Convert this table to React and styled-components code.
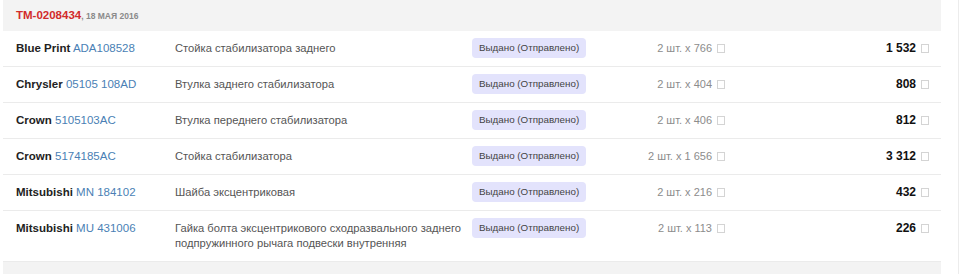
import React from 'react';
import styled, { createGlobalStyle } from 'styled-components';

const rows = [
  { brand: 'Blue Print', code: 'ADA108528', name: 'Стойка стабилизатора заднего', qty: '2 шт. x 766', total: '1 532' },
  { brand: 'Chrysler', code: '05105 108AD', name: 'Втулка заднего стабилизатора', qty: '2 шт. x 404', total: '808' },
  { brand: 'Crown', code: '5105103AC', name: 'Втулка переднего стабилизатора', qty: '2 шт. x 406', total: '812' },
  { brand: 'Crown', code: '5174185AC', name: 'Стойка стабилизатора', qty: '2 шт. x 1 656', total: '3 312' },
  { brand: 'Mitsubishi', code: 'MN 184102', name: 'Шайба эксцентриковая', qty: '2 шт. x 216', total: '432' },
  {
    brand: 'Mitsubishi',
    code: 'MU 431006',
    name: 'Гайка болта эксцентрикового сходразвального заднего подпружинного рычага подвески внутренняя',
    qty: '2 шт. x 113',
    total: '226'
  }
];

function App() {
  return (
    <>
      <GlobalStyle />
      <Page>
        <Order>
          <OrderHeader>
            <OrderNumber>ТМ-0208434</OrderNumber>
            <OrderDate>, 18 мая 2016</OrderDate>
          </OrderHeader>
          {rows.map((r, i) => (
            <Row key={i}>
              <Brand>
                <b>{r.brand}</b> <CodeLink>{r.code}</CodeLink>
              </Brand>
              <Name>{r.name}</Name>
              <Status>
                <Badge>Выдано (Отправлено)</Badge>
              </Status>
              <Qty>
                {r.qty}
                <Rub />
              </Qty>
              <Total>
                {r.total}
                <Rub />
              </Total>
            </Row>
          ))}
          <OrderHeader />
        </Order>
      </Page>
    </>
  );
}

const GlobalStyle = createGlobalStyle`
  body {
    margin: 0;
    background: #fff;
    font-family: "Liberation Sans", Arial, sans-serif;
  }
`;

const Page = styled.div`
  width: 955px;
  height: 274px;
  padding-left: 3px;
  border-right: 1px solid #ececec;
  overflow: hidden;
`;

const Order = styled.div`
  width: 938px;
`;

const OrderHeader = styled.div`
  display: flex;
  align-items: baseline;
  height: 31px;
  padding: 9px 0 0 13px;
  box-sizing: border-box;
  background: #f3f3f3;
`;

const OrderNumber = styled.span`
  color: #d22b2b;
  font-size: 11.5px;
  font-weight: 700;
`;

const OrderDate = styled.span`
  color: #8a8a8a;
  font-size: 8.5px;
  font-weight: 700;
  text-transform: uppercase;
`;

const Row = styled.div`
  display: grid;
  grid-template-columns: 172px 297px 157px 96px 1fr;
  align-items: start;
  padding: 7px 12px 8px 0;
  border-bottom: 1px solid #ebebeb;
  font-size: 11.2px;
  line-height: 20px;

  &:nth-child(7) {
    padding-bottom: 10px;
  }
`;

const Brand = styled.div`
  padding-left: 13px;
  color: #222;
  font-size: 11.5px;
  white-space: nowrap;
`;

const CodeLink = styled.a`
  color: #4a7fb5;
  text-decoration: none;
`;

const Name = styled.div`
  color: #555;
  line-height: 15px;
  padding-top: 3px;
`;

const Status = styled.div`
  display: flex;
`;

const Badge = styled.span`
  display: inline-block;
  height: 20px;
  line-height: 20px;
  padding: 0 7px;
  border-radius: 4px;
  background: #e3e3fc;
  color: #444;
  font-size: 9.8px;
`;

const Qty = styled.div`
  display: flex;
  align-items: center;
  justify-content: flex-end;
  color: #8c8c8c;
  font-size: 11px;
  white-space: nowrap;
`;

const Total = styled.div`
  display: flex;
  align-items: center;
  justify-content: flex-end;
  color: #111;
  font-size: 12px;
  font-weight: 700;
`;

const Rub = styled.span`
  display: inline-block;
  width: 6px;
  height: 7px;
  margin-left: 5px;
  border: 1px solid #d4d4d4;
`;

export default App;
